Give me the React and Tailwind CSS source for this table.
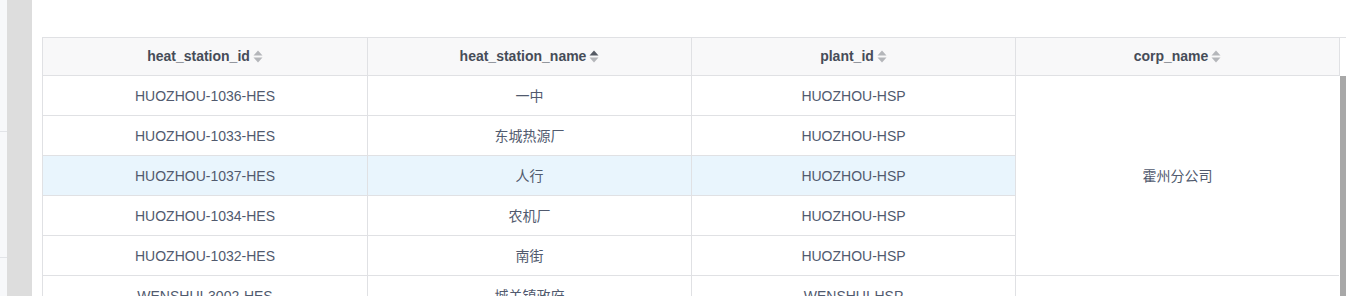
import React from "react";

const rows = [
  { id: "HUOZHOU-1036-HES", name: "一中", plant: "HUOZHOU-HSP" },
  { id: "HUOZHOU-1033-HES", name: "东城热源厂", plant: "HUOZHOU-HSP" },
  { id: "HUOZHOU-1037-HES", name: "人行", plant: "HUOZHOU-HSP", active: true },
  { id: "HUOZHOU-1034-HES", name: "农机厂", plant: "HUOZHOU-HSP" },
  { id: "HUOZHOU-1032-HES", name: "南街", plant: "HUOZHOU-HSP" },
];

const SortIcon = ({ up }) => (
  <svg width="10" height="13" viewBox="0 0 10 13" className="ml-[3px] shrink-0">
    <path d="M5 0.5 L9.5 5.5 L0.5 5.5 Z" fill={up ? "#555a64" : "#b4b6ba"} />
    <path d="M5 12.5 L9.5 7.5 L0.5 7.5 Z" fill="#b4b6ba" />
  </svg>
);

const Head = ({ label, up }) => (
  <div className="flex h-[38px] items-center justify-center border-r border-b border-[#e0e1e4] bg-[#f8f8f9]">
    <span className="text-[14px] font-bold text-[#464c58]">{label}</span>
    <SortIcon up={up} />
  </div>
);

const Cell = ({ children, active }) => (
  <div
    className={`flex h-[40px] items-center justify-center border-r border-b border-[#e0e1e4] pt-[2px] text-[14px] text-[#515a6e] ${
      active ? "bg-[#e9f5fd]" : "bg-white"
    }`}
  >
    {children}
  </div>
);

export default function App() {
  return (
    <div
      className="flex h-[296px] w-[1351px] overflow-hidden bg-white"
      style={{ fontFamily: '"Liberation Sans", Arial, "Noto Sans CJK SC", sans-serif' }}
    >
      <div className="flex w-[7px] flex-col bg-[#f7f8fa]">
        <div className="h-[132px] border-b border-[#e2e4e8]" />
        <div className="h-[126px] border-b border-[#e2e4e8]" />
      </div>
      <div className="w-[25px] bg-[#dddddd]" />
      <div className="flex-1 pl-[10px] pt-[37px]">
        <div className="w-[1304px] border-l border-t border-[#e0e1e4]">
          <div className="grid grid-cols-[325px_324px_324px_324px_7px]">
            <Head label="heat_station_id" />
            <Head label="heat_station_name" up />
            <Head label="plant_id" />
            <Head label="corp_name" />
            <div />
          </div>
          <div className="flex">
            <div className="grid grid-cols-[325px_324px_324px_323px]">
              {rows.map((r, i) => (
                <React.Fragment key={r.id}>
                  <Cell active={r.active}>{r.id}</Cell>
                  <Cell active={r.active}>{r.name}</Cell>
                  <Cell active={r.active}>{r.plant}</Cell>
                  {i === 0 && (
                    <div className="col-start-4 row-span-5 row-start-1 flex items-center justify-center border-b border-[#e0e1e4] pt-[2px] text-[14px] text-[#515a6e]">
                      霍州分公司
                    </div>
                  )}
                </React.Fragment>
              ))}
              <Cell>WENSHUI-3002-HES</Cell>
              <Cell>城关镇政府</Cell>
              <Cell>WENSHUI-HSP</Cell>
              <div className="h-[40px] border-b border-[#e0e1e4]" />
            </div>
            <div className="w-[7px] pl-px">
              <div className="h-[240px] w-[6px] bg-[#a8a8a8]" />
            </div>
          </div>
        </div>
      </div>
    </div>
  );
}
